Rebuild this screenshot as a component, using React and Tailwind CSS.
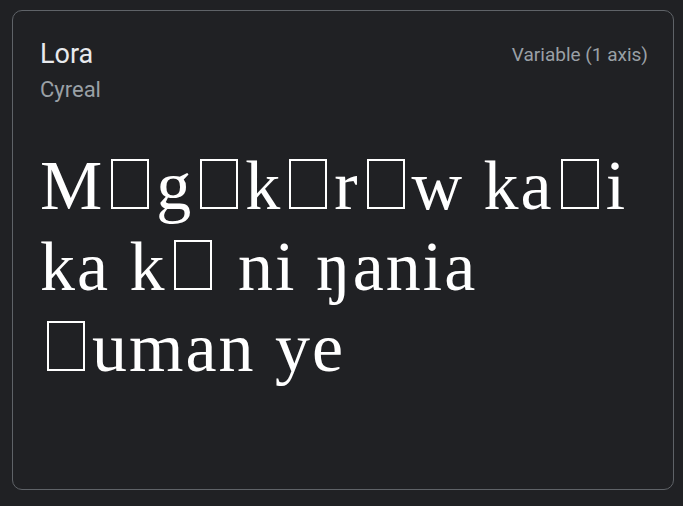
import React from "react";

// missing-glyph box, the real character kept inside
const Tofu = ({ ch }) => (
  <span className="inline-block w-[38px] h-[50px] mx-[7px] overflow-hidden border-2 border-white text-transparent text-[24px] leading-[46px] text-center tracking-normal align-baseline">
    {ch}
  </span>
);

const App = () => {
  return (
    <div className="w-[683px] h-[506px] bg-[#202124] pt-[10px] pl-[12px]">
      {/* Font card */}
      <div className="w-[662px] h-[480px] rounded-[10px] border border-[#5f6368] pt-[27px] pl-[27px] pr-[25px] font-['Roboto',sans-serif]">
        <div className="flex justify-between items-start">
          <div className="text-[27px] leading-[32px] text-[#e8eaed]">Lora</div>
          <div className="mt-[3px] text-[19px] leading-[28px] text-[#9aa0a6]">Variable (1 axis)</div>
        </div>
        <div className="mt-[6px] text-[22px] leading-[28px] text-[#9aa0a6]">Cyreal</div>

        <div className="mt-[41px] text-white text-[70px] leading-[81px] tracking-[2px] whitespace-nowrap font-['Liberation_Serif',serif]">
          <div>
            M<Tofu ch="ɔ" />g<Tofu ch="ɔ" />k<Tofu ch="ɔ" />r<Tofu ch="ɔ" />w ka<Tofu ch="ɲ" />i
          </div>
          <div>
            ka k<Tofu ch="ɔ" /> ni ŋania
          </div>
          <div>
            <Tofu ch="ɲ" />uman ye
          </div>
        </div>
      </div>
    </div>
  );
};

export default App;
